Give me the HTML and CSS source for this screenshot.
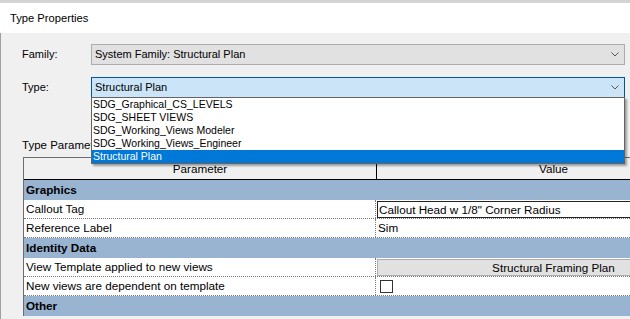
FILE: index.html
```html
<!DOCTYPE html>
<html lang="en">
<head>
    <meta charset="utf-8">
    <title>Type Properties</title>
    <link rel="stylesheet" href="styles.css">
</head>
<body>
    <div class="strip"></div>
    <div class="titlebar">Type Properties</div>

    <div class="dialog">
        <div class="field">
            <label class="field-label">Family:</label>
            <div class="combo combo-disabled">
                <span>System Family: Structural Plan</span>
                <svg class="chevron" width="8" height="5" viewBox="0 0 8 5"><path d="M0.5 0.5 L4 4 L7.5 0.5" /></svg>
            </div>
        </div>

        <div class="field">
            <label class="field-label">Type:</label>
            <div class="combo combo-open">
                <span>Structural Plan</span>
                <svg class="chevron" width="8" height="5" viewBox="0 0 8 5"><path d="M0.5 0.5 L4 4 L7.5 0.5" /></svg>

                <!-- open list of the Type combo -->
                <ul class="dropdown">
                    <li>SDG_Graphical_CS_LEVELS</li>
                    <li>SDG_SHEET VIEWS</li>
                    <li>SDG_Working_Views Modeler</li>
                    <li>SDG_Working_Views_Engineer</li>
                    <li class="selected">Structural Plan</li>
                </ul>
            </div>
        </div>

        <div class="section-label">Type Parameters</div>

        <div class="grid">
            <div class="header">
                <div class="cell-param">Parameter</div>
                <div class="cell-value">Value</div>
            </div>

            <div class="group">Graphics</div>
            <div class="row">
                <div class="cell-param">Callout Tag</div>
                <div class="cell-value"><div class="value-edit">Callout Head w 1/8" Corner Radius</div></div>
            </div>
            <div class="row">
                <div class="cell-param">Reference Label</div>
                <div class="cell-value">Sim</div>
            </div>

            <div class="group">Identity Data</div>
            <div class="row">
                <div class="cell-param">View Template applied to new views</div>
                <div class="cell-value"><div class="value-button">Structural Framing Plan</div></div>
            </div>
            <div class="row">
                <div class="cell-param">New views are dependent on template</div>
                <div class="cell-value"><span class="checkbox"></span></div>
            </div>

            <div class="group">Other</div>
        </div>
    </div>
</body>
</html>
```

FILE: styles.css
```css
html, body {
    margin: 0;
    padding: 0;
}
body {
    width: 630px;
    height: 319px;
    overflow: hidden;
    background: #f0f0f0;
    font-family: "Liberation Sans", Arial, sans-serif;
    color: #000;
}
.strip {
    height: 3px;
    background: #d4d4d4;
}
.titlebar {
    height: 30px;
    line-height: 30px;
    padding-left: 10px;
    background: #ffffff;
    font-size: 11.2px;
}
.dialog {
    height: 286px;
    border-left: 1px solid #a0a0a0;
    padding: 11px 0 0 21px;
    overflow: hidden;
}
.field {
    display: flex;
    align-items: center;
    height: 20px;
    margin-bottom: 13px;
    font-size: 11px;
}
.field-label {
    width: 69px;
    flex-shrink: 0;
}
.combo {
    position: relative;
    width: 534px;
    height: 21px;
    box-sizing: border-box;
    display: flex;
    align-items: center;
    justify-content: space-between;
    padding: 0 5px 0 3px;
}
.combo-disabled {
    background: #e1e1e1;
    border: 1px solid #adadad;
}
.combo-open {
    background: #cce4f7;
    border: 1px solid #005499;
}
.chevron path {
    fill: none;
    stroke: #555;
    stroke-width: 1;
}
.dropdown {
    position: absolute;
    top: 100%;
    left: -1px;
    right: -1px;
    margin: 0;
    padding: 0;
    list-style: none;
    background: #ffffff;
    border: 1px solid #646464;
    box-shadow: 2px 2px 2px rgba(0, 0, 0, 0.35);
    font-size: 10.5px;
    z-index: 10;
}
.dropdown li {
    height: 13px;
    line-height: 13px;
    padding-left: 1px;
}
.dropdown .selected {
    background: #0078d7;
    color: #ffffff;
}
.section-label {
    margin-top: 41px;
    height: 14px;
    line-height: 14px;
    font-size: 11.5px;
    margin-bottom: 5px;
}
.grid {
    width: 706px;
    margin-left: 1px;
    border-top: 1px solid #6d6d6d;
    border-left: 1px solid #6d6d6d;
    font-size: 11.7px;
}
.header {
    display: flex;
    height: 21px;
    line-height: 21px;
    background: #f0f0f0;
    border-bottom: 1px solid #000;
    text-align: center;
}
.header .cell-param {
    border-right: 1px solid #000;
}
.cell-param {
    width: 352px;
    flex-shrink: 0;
}
.cell-value {
    flex: 1;
}
.group {
    height: 20px;
    line-height: 20px;
    padding-left: 2px;
    background: #99b4d1;
    font-weight: bold;
}
.row {
    display: flex;
    height: 18px;
    line-height: 18px;
    background: #ffffff;
    border-bottom: 1px dotted #7a7a7a;
}
.row .cell-param {
    padding-left: 2px;
    box-sizing: border-box;
    border-right: 1px dotted #7a7a7a;
}
.row .cell-value {
    padding-left: 2px;
}
.value-edit {
    height: 17px;
    line-height: 15px;
    margin: 1px 0 0 -1px;
    box-sizing: border-box;
    border: 1px solid #222;
    padding-left: 1px;
}
.value-button {
    height: 17px;
    line-height: 15px;
    margin: 1px 0 0 -1px;
    box-sizing: border-box;
    background: #e1e1e1;
    border: 1px solid #adadad;
    text-align: center;
}
.checkbox {
    display: inline-block;
    width: 13px;
    height: 13px;
    box-sizing: border-box;
    border: 1px solid #333;
    background: #ffffff;
    margin: 3px 0 0 2px;
    vertical-align: top;
}
```
